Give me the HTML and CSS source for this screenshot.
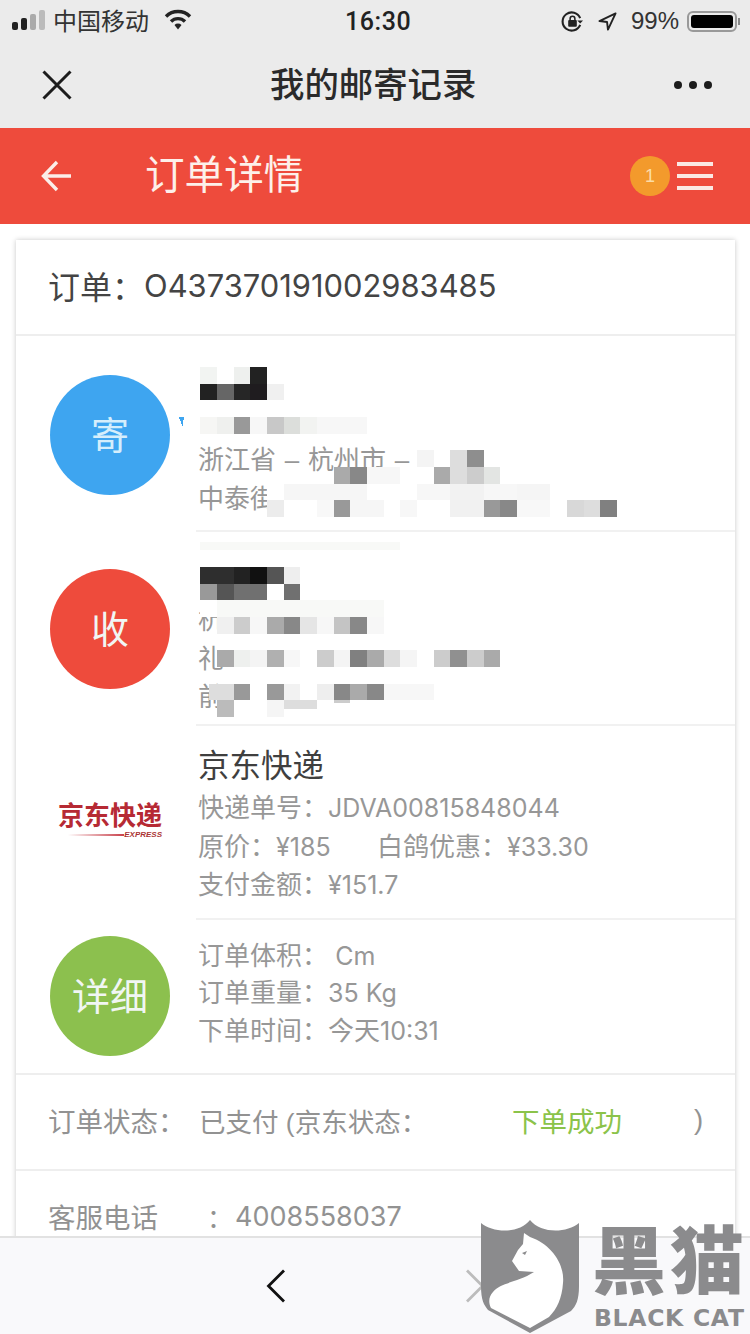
FILE: index.html
```html
<!DOCTYPE html>
<html lang="zh">
<head>
<meta charset="utf-8">
<title>我的邮寄记录</title>
<link rel="stylesheet" href="styles.css">
</head>
<body>
<div class="app">
  <div class="status">
    <div class="status-left">
      <svg class="signal" viewBox="0 0 33 20"><rect x="0" y="12" width="6" height="8" rx="2" fill="#222"/><rect x="9" y="8" width="6" height="12" rx="2" fill="#222"/><rect x="18" y="4" width="6" height="16" rx="2" fill="#aaa"/><rect x="27" y="0" width="6" height="20" rx="2" fill="#bbb"/></svg>
      <span class="carrier">中国移动</span>
      <svg class="wifi" viewBox="0 0 28 21"><path d="M2 7.5a17 17 0 0 1 24 0" fill="none" stroke="#222" stroke-width="3.4"/><path d="M7 12.5a10 10 0 0 1 14 0" fill="none" stroke="#222" stroke-width="3.4"/><path d="M10.5 16a5 5 0 0 1 7 0L14 20.5z" fill="#222"/></svg>
    </div>
    <span class="time">16:30</span>
    <div class="status-right">
      <svg class="lock" viewBox="0 0 24 24"><path d="M20 8.5a9.5 9.5 0 1 0 0 7" fill="none" stroke="#222" stroke-width="2.2"/><path d="M23 11l-3 3-3-3z" fill="#222"/><rect x="7.5" y="10.5" width="9" height="7" rx="1" fill="#222"/><path d="M9.5 11V9a2.5 2.5 0 0 1 5 0v2" fill="none" stroke="#222" stroke-width="1.6"/></svg>
      <svg class="loc" viewBox="0 0 20 20"><path d="M18.5 1.5 1.5 9.5l8 1 1 8z" fill="none" stroke="#222" stroke-width="2" stroke-linejoin="round"/></svg>
      <span class="pct">99%</span>
      <span class="battery"><span class="battery-fill"></span></span>
      <span class="nub"></span>
    </div>
  </div>
  <div class="nav">
    <svg class="nav-close" viewBox="0 0 30 30"><path d="M1.5 1.5l27 27M28.5 1.5l-27 27" stroke="#1c1c1c" stroke-width="3" fill="none"/></svg>
    <h1 class="nav-title">我的邮寄记录</h1>
    <div class="dots"><i></i><i></i><i></i></div>
  </div>
  <header class="head">
    <svg class="head-back" viewBox="0 0 32 32"><path d="M30 16H3M16 2 2.500 16 16 30" fill="none" stroke="#fbeee9" stroke-width="3.400"/></svg>
    <h2 class="head-title">订单详情</h2>
    <span class="badge">1</span>
    <div class="burger"><i></i><i></i><i></i></div>
  </header>
  <main class="content">
    <div class="card">
      <div class="order"><span>订单：</span><span class="order-no">O437370191002983485</span></div>
      <section class="row row-send">
        <div class="side"><div class="circle blue">寄</div></div>
        <div class="body body-send">
          <p class="line line-addr">浙江省 – 杭州市 –</p>
          <p class="line">中泰街</p>
        </div>
      </section>
      <section class="row row-recv">
        <div class="side"><div class="circle red">收</div></div>
        <div class="body body-recv">
          <p class="line">杭</p>
          <p class="line">礼</p>
          <p class="line">前</p>
        </div>
      </section>
      <section class="row row-exp">
        <div class="side">
          <div class="logo">
            <div class="logo-cn">京东快递</div>
            <div class="logo-en"><span class="swoosh"></span><em>EXPRESS</em></div>
          </div>
        </div>
        <div class="body body-info">
          <p class="courier">京东快递</p>
          <p class="line">快递单号：<span class="n">JDVA00815848044</span></p>
          <p class="line"><span class="price-a">原价：<span class="n">¥185</span></span><span>白鸽优惠：<span class="n">¥33.30</span></span></p>
          <p class="line">支付金额：<span class="n">¥151.7</span></p>
        </div>
      </section>
      <section class="row row-detail">
        <div class="side"><div class="circle green">详细</div></div>
        <div class="body body-info">
          <p class="line">订单体积： <span class="n">Cm</span></p>
          <p class="line">订单重量：<span class="n">35 Kg</span></p>
          <p class="line">下单时间：今天<span class="n">10:31</span></p>
        </div>
      </section>
      <div class="field">
        <span class="field-label">订单状态：</span>
        <span class="field-a">已支付 (京东状态：</span>
        <span class="field-ok">下单成功</span>
        <span class="field-end">)</span>
      </div>
      <div class="field">
        <span class="field-label">客服电话</span>
        <span class="field-colon">：</span>
        <span class="field-phone">4008558037</span>
      </div>
      <svg class="mosaic" viewBox="0 0 26 21" shape-rendering="crispEdges" aria-hidden="true">
        <polygon points="-1.300,3 -1,3 -1.050,3.600" fill="#3ea5f0"/>
        <g>
          <rect x="0" y="0" width="1" height="1" fill="#f2f4f2"/><rect x="2" y="0" width="1" height="1" fill="#eef0ee"/><rect x="3" y="0" width="1" height="1" fill="#222"/>
          <rect x="0" y="1" width="1" height="1" fill="#222"/><rect x="1" y="1" width="1" height="1" fill="#666"/><rect x="2" y="1" width="1" height="1" fill="#262626"/><rect x="3" y="1" width="1" height="1" fill="#1f1c1f"/><rect x="4" y="1" width="1" height="1" fill="#f0f0f0"/>
          <rect x="0" y="3" width="1" height="1" fill="#f6f6f4"/><rect x="1" y="3" width="1" height="1" fill="#eff0ee"/><rect x="2" y="3" width="1" height="1" fill="#999"/><rect x="3" y="3" width="1" height="1" fill="#f7f7f7"/><rect x="4" y="3" width="1" height="1" fill="#c8c8c8"/><rect x="5" y="3" width="1" height="1" fill="#dcdedb"/><rect x="6" y="3" width="1" height="1" fill="#f2f3f1"/><rect x="7" y="3" width="3" height="1" fill="#f7f7f7"/>
          <rect x="13" y="5" width="1" height="1" fill="#f4f4f4"/><rect x="14" y="5" width="1" height="1" fill="#fff"/><rect x="15" y="5" width="1" height="1" fill="#ddd"/><rect x="16" y="5" width="1" height="1" fill="#8e8e8e"/>
          <rect x="8" y="6" width="1" height="1" fill="#aaa"/><rect x="9" y="6" width="1" height="1" fill="#888"/><rect x="10" y="6" width="2" height="1" fill="#f7f7f7"/><rect x="14" y="6" width="1" height="1" fill="#aaa"/><rect x="15" y="6" width="1" height="1" fill="#ddd"/><rect x="16" y="6" width="1" height="1" fill="#ccc"/><rect x="17" y="6" width="1" height="1" fill="#e3e5e3"/>
          <rect x="4" y="7" width="22" height="1" fill="#fff"/><rect x="5" y="7" width="1" height="1" fill="#f6f6f6"/><rect x="6" y="7" width="4" height="1" fill="#f6f6f6"/><rect x="13" y="7" width="2" height="1" fill="#f7f7f7"/><rect x="15" y="7" width="2" height="1" fill="#f2f2f2"/><rect x="17" y="7" width="2" height="1" fill="#f7f7f7"/><rect x="19" y="7" width="2" height="1" fill="#f5f5f5"/>
          <rect x="4" y="8" width="21" height="1" fill="#fff"/><rect x="4" y="8" width="1" height="1" fill="#ececec"/><rect x="7" y="8" width="1" height="1" fill="#f8f8f8"/><rect x="8" y="8" width="1" height="1" fill="#999"/><rect x="9" y="8" width="2" height="1" fill="#f6f6f6"/><rect x="12" y="8" width="1" height="1" fill="#f7f7f7"/><rect x="15" y="8" width="2" height="1" fill="#f1f1f1"/><rect x="17" y="8" width="1" height="1" fill="#999"/><rect x="18" y="8" width="1" height="1" fill="#888"/><rect x="19" y="8" width="2" height="1" fill="#f8f8f8"/><rect x="22" y="8" width="1" height="1" fill="#d8d8d8"/><rect x="23" y="8" width="1" height="1" fill="#ddd"/><rect x="24" y="8" width="1" height="1" fill="#808080"/>
        </g>
        <g>
          <rect x="0" y="10.500" width="12" height="0.500" fill="#f8f9f7"/>
          <rect x="0" y="12" width="2" height="1" fill="#2e2e2e"/><rect x="2" y="12" width="1" height="1" fill="#222"/><rect x="3" y="12" width="1" height="1" fill="#111"/><rect x="4" y="12" width="1" height="1" fill="#555"/><rect x="5" y="12" width="1" height="1" fill="#eee"/>
          <rect x="0" y="13" width="1" height="1" fill="#999"/><rect x="1" y="13" width="1" height="1" fill="#555"/><rect x="2" y="13" width="2" height="1" fill="#707070"/><rect x="5" y="13" width="1" height="1" fill="#707070"/>
          <rect x="0" y="14" width="1" height="1" fill="#fff"/><rect x="1" y="14" width="10" height="1" fill="#f8f9f7"/>
          <rect x="1" y="15" width="1" height="1" fill="#f0f0f0"/><rect x="2" y="15" width="1" height="1" fill="#ccc"/><rect x="3" y="15" width="1" height="1" fill="#f7f7f7"/><rect x="4" y="15" width="1" height="1" fill="#aaa"/><rect x="5" y="15" width="1" height="1" fill="#888"/><rect x="6" y="15" width="1" height="1" fill="#e5e5e5"/><rect x="7" y="15" width="1" height="1" fill="#f7f7f7"/><rect x="8" y="15" width="1" height="1" fill="#c4c4c4"/><rect x="9" y="15" width="1" height="1" fill="#888"/><rect x="10" y="15" width="1" height="1" fill="#f7f7f7"/>
          <rect x="1" y="17" width="1" height="1" fill="#aaa"/><rect x="2" y="17" width="1" height="1" fill="#eef0ee"/><rect x="3" y="17" width="1" height="1" fill="#f4f4f4"/><rect x="4" y="17" width="1" height="1" fill="#b0b0b0"/><rect x="5" y="17" width="1" height="1" fill="#f7f7f7"/><rect x="7" y="17" width="1" height="1" fill="#ccc"/><rect x="8" y="17" width="1" height="1" fill="#f4f4f4"/><rect x="9" y="17" width="1" height="1" fill="#808080"/><rect x="10" y="17" width="1" height="1" fill="#aaa"/><rect x="11" y="17" width="1" height="1" fill="#ddd"/><rect x="12" y="17" width="1" height="1" fill="#f5f5f5"/><rect x="14" y="17" width="1" height="1" fill="#ccc"/><rect x="15" y="17" width="1" height="1" fill="#909090"/><rect x="16" y="17" width="1" height="1" fill="#ccc"/><rect x="17" y="17" width="1" height="1" fill="#aaa"/>
          <rect x="0.500" y="19" width="0.500" height="1" fill="#ddd"/><rect x="1" y="19" width="1" height="1" fill="#ddd"/><rect x="2" y="19" width="1" height="1" fill="#999"/><rect x="4" y="19" width="1" height="1" fill="#999"/><rect x="5" y="19" width="1" height="1" fill="#f2f2f2"/><rect x="7" y="19" width="1" height="1" fill="#eee"/><rect x="8" y="19" width="1" height="1" fill="#888"/><rect x="9" y="19" width="1" height="1" fill="#aaa"/><rect x="10" y="19" width="1" height="1" fill="#888"/><rect x="11" y="19" width="3" height="1" fill="#f7f7f7"/>
          <rect x="1" y="20" width="1" height="1" fill="#bbb"/><rect x="4" y="20" width="1" height="1" fill="#f5f5f5"/><rect x="5" y="20" width="2" height="0.500" fill="#ddd"/><rect x="8" y="20" width="1" height="0.150" fill="#ccc"/>
        </g>
      </svg>
    </div>
  </main>
  <footer class="foot">
    <svg class="foot-prev" viewBox="0 0 20 34"><path d="M18 1.500 2.500 17 18 32.500" fill="none" stroke="#111" stroke-width="2.800"/></svg>
    <svg class="foot-next" viewBox="0 0 20 34"><path d="M2 1.500 17.500 17 2 32.500" fill="none" stroke="#bcbcbc" stroke-width="2.800"/></svg>
  </footer>
  <div class="mark">
    <svg class="mark-shield" viewBox="0 0 98 113"><path fill="#8b8b8d" d="M0 3C12 13 38 14 49 0 60 14 86 13 98 3V66C98 80 95 86 90 91L49 113 7 90C3 85 0 80 0 66Z"/><path fill="#fff" d="M43 13 49 17C70 24 84 44 82 63 81 78 76 89 68 97L49 108 10 88C7 82 8 76 12 72 20 62 36 63 53 52L38 51 31 41 37 30 42 24Z"/><path fill="#8b8b8d" d="M41 33l5-2-2 4z"/></svg>
    <div class="mark-text">
      <div class="mark-cn">黑猫</div>
      <div class="mark-en">BLACK CAT</div>
    </div>
  </div>
</div>
</body>
</html>
```

FILE: styles.css
```css
* { box-sizing: border-box; }
html, body { margin: 0; padding: 0; }
body { background: #fff; font-family: "Liberation Sans", "Noto Sans CJK SC", sans-serif; }
p, h1, h2 { margin: 0; font-weight: 400; }
.app { position: relative; width: 750px; height: 1334px; overflow: hidden; display: flex; flex-direction: column; background: #fff; }

.status { height: 42px; background: #ebebeb; display: flex; align-items: center; justify-content: space-between; padding: 0 10px 0 12px; position: relative; flex: none; color: #222; }
.status-left, .status-right { display: flex; align-items: center; }
.signal { width: 33px; height: 20px; margin-bottom: 2px; }
.carrier { font-size: 24px; margin: 0 0 4px 8px; color: #333; }
.wifi { width: 28px; height: 21px; margin: 0 0 4px 15px; }
.time { position: absolute; left: 345px; font-size: 25px; font-weight: 500; letter-spacing: .6px; font-family: "Roboto", "Liberation Sans", sans-serif; }
.lock { width: 23px; height: 23px; }
.loc { width: 19px; height: 19px; margin-left: 14px; }
.pct { font-size: 24px; margin-left: 14px; color: #333; }
.battery { width: 50px; height: 21px; border: 2px solid #999; border-radius: 6px; padding: 2px; margin-left: 8px; display: flex; }
.battery-fill { flex: 1; background: #000; border-radius: 3px; }
.nub { width: 2px; height: 7px; background: #888; margin-left: 1px; }

.nav { height: 86px; background: #ebebeb; display: flex; align-items: center; padding: 0 38px 0 42px; position: relative; flex: none; }
.nav-close { width: 30px; height: 30px; }
.nav-title { position: absolute; left: 270px; font-size: 34.400px; line-height: 48px; font-weight: 500; color: #2a2a2a; white-space: nowrap; }
.dots { margin-left: auto; display: flex; gap: 7px; }
.dots i { width: 8px; height: 8px; border-radius: 50%; background: #1c1c1c; }

.head { height: 96px; background: #ee4b3c; display: flex; align-items: center; padding: 0 37px 0 41px; flex: none; }
.head-back { width: 32px; height: 32px; }
.head-title { margin-left: 72px; font-size: 39.600px; line-height: 52px; padding-bottom: 2px; color: #fdf0ea; white-space: nowrap; }
.badge { margin-left: auto; width: 40px; height: 40px; border-radius: 50%; background: #f39a2c; color: #fbdca6; font-size: 18px; display: flex; align-items: center; justify-content: center; }
.burger { margin-left: 7px; width: 36px; display: flex; flex-direction: column; gap: 8px; }
.burger i { height: 4px; background: #fbe9e4; }

.content { flex: 1; min-height: 0; overflow: hidden; padding: 16px 15px 0 16px; background: #fff; }
.card { position: relative; background: #fff; box-shadow: 0 0 5px rgba(0,0,0,.22); }
.order { height: 96px; display: flex; align-items: center; padding: 0 0 4px 32px; font-size: 32px; color: #444; border-bottom: 2px solid #eee; white-space: nowrap; }
.order-no { font-family: "Inter", "Liberation Sans", sans-serif; font-size: 30.900px; }

.row { display: flex; }
.row-send { height: 196px; }
.row-recv { height: 194px; }
.row-exp { height: 194px; }
.row-detail { height: 155px; border-bottom: 2px solid #eee; }
.side { width: 180px; flex: none; padding-left: 34px; }
.body { flex: 1; padding-left: 2px; border-bottom: 2px solid #f1f1f1; }
.row-detail .body { border-bottom: 0; }
.body-send { padding-top: 105px; }
.body-recv { padding-top: 69px; }
.body-info { padding-top: 17px; }
.line { font-size: 26px; line-height: 38px; height: 38.500px; color: #979797; white-space: pre; }
.line-addr { word-spacing: 1.500px; }
.row-detail .line { height: 38px; }
.row-detail .line + .line { position: relative; top: -1px; }
.n { font-family: "Inter", "Liberation Sans", sans-serif; font-size: 25px; }
.courier { font-size: 31.500px; line-height: 46px; color: #3f3f3f; }
.price-a { display: inline-block; width: 179px; }

.circle { width: 120px; height: 120px; border-radius: 50%; color: #f1f6f4; font-size: 38px; padding-bottom: 5px; display: flex; align-items: center; justify-content: center; }
.row-send .circle { margin-top: 39px; }
.row-recv .circle { margin-top: 37px; }
.row-detail .circle { margin-top: 16px; }
.blue { background: #3ea5f0; color: #d5eefc; }
.red { background: #ee4b3c; }
.green { background: #8cc04e; }

.logo { margin: 76px 0 0 8px; width: 104px; }
.logo-cn { font-size: 26px; line-height: 28px; font-weight: 700; color: #b62a34; white-space: nowrap; }
.logo-en { display: flex; align-items: center; height: 9px; }
.swoosh { flex: 1; height: 2px; background: linear-gradient(90deg, #fff 15%, #c8404a); }
.logo-en em { font-size: 8px; font-weight: 700; color: #a33; line-height: 9px; }

.field { height: 96px; display: flex; align-items: center; padding: 0 0 4px 32px; border-bottom: 2px solid #eee; font-size: 27.500px; color: #929292; position: relative; }
.field-label { width: 151px; flex: none; white-space: nowrap; }
.field-a { width: 313px; flex: none; white-space: nowrap; font-size: 26.500px; }
.field-ok { font-size: 27.500px; color: #8bc34a; width: 182px; flex: none; }
.field-end { flex: none; }
.field-colon { width: 36px; flex: none; padding-left: 8px; font-size: 26px; }
.field-phone { font-family: "Inter", "Liberation Sans", sans-serif; font-size: 27px; }

.mosaic { position: absolute; left: 184px; top: 127px; width: 434.200px; height: 350px; overflow: visible; }

.foot { position: absolute; left: 0; right: 0; bottom: 0; height: 98px; background: #f9f9fb; border-top: 2px solid #e2e2e2; display: flex; align-items: center; padding: 0 0 0 266px; }
.foot-prev, .foot-next { width: 20px; height: 34px; }
.foot-next { margin-left: 179px; }

.mark { position: absolute; left: 481px; top: 1220px; display: flex; color: #8b8b8d; }
.mark-shield { width: 98px; height: 113px; flex: none; }
.mark-text { margin-left: 13px; width: 158px; }
.mark-cn { font-size: 74px; line-height: 76px; font-weight: 900; letter-spacing: 4px; white-space: nowrap; margin-top: 5px; }
.mark-en { font-family: "DejaVu Sans", sans-serif; font-weight: 700; font-size: 23.500px; line-height: 22px; letter-spacing: .7px; margin: 6px 0 0 2px; white-space: nowrap; }
```
